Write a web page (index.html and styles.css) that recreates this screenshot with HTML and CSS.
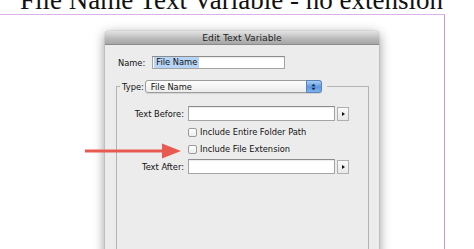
FILE: index.html
```html
<!DOCTYPE html>
<html lang="en">

<head>
    <meta charset="UTF-8">
    <meta name="viewport" content="width=device-width, initial-scale=1.0">
    <title>File Name Text Variable - no extension</title>
    <link rel="stylesheet" href="styles.css">
</head>

<body>
    <h1 class="heading">File Name Text Variable - no extension</h1>

    <div class="frame">
        <div class="dialog">
            <div class="titlebar">Edit Text Variable</div>
            <div class="dialog-body">
                <div class="name-row">
                    <label>Name:</label>
                    <div class="field field-name"><span class="selected">File Name</span></div>
                </div>

                <fieldset class="group">
                    <legend class="group-legend">
                        <label>Type:</label>
                        <div class="select">
                            <span>File Name</span>
                            <span class="stepper">
                                <svg viewBox="0 0 6 9" width="5" height="8">
                                    <path d="M 0.5,3.5 3,0.5 5.5,3.5 Z M 0.5,5.5 3,8.5 5.5,5.5 Z"></path>
                                </svg>
                            </span>
                        </div>
                    </legend>

                    <div class="rows">
                        <label class="row-label">Text Before:</label>
                        <div class="field"></div>
                        <div class="insert"><span class="tri"></span></div>

                        <div class="check">
                            <span class="box"></span>
                            <span>Include Entire Folder Path</span>
                        </div>

                        <div class="check">
                            <span class="box"></span>
                            <span>Include File Extension</span>
                        </div>

                        <label class="row-label">Text After:</label>
                        <div class="field"></div>
                        <div class="insert"><span class="tri"></span></div>
                    </div>
                </fieldset>
            </div>
        </div>

        <svg class="arrow" viewBox="0 0 100 16" width="100" height="16">
            <path d="M 0,6.5 82,6.5 82,9.5 0,9.5 Z"></path>
            <path d="M 77,0.5 96,8 77,15.5 Z"></path>
        </svg>
    </div>
</body>

</html>
```

FILE: styles.css
```css
* {
    box-sizing: border-box;
}

body {
    margin: 0;
    background: #fff;
    height: 249px;
    overflow: hidden;
}

.heading {
    margin: -13px 0 0 20px;
    font-family: "Liberation Serif", "Times New Roman", serif;
    font-weight: normal;
    font-size: 27px;
    line-height: 27px;
    color: #111;
    white-space: nowrap;
}

.frame {
    position: relative;
    width: 445px;
    height: 235px;
    overflow: hidden;
    border-top: 1px solid #dcb0e8;
    border-right: 1px solid #b89ce8;
    padding: 16px 0 0 105px;
}

.dialog {
    width: 274px;
    height: 230px;
    background: #ececec;
    border-radius: 4px 4px 0 0;
    box-shadow: 0 3px 12px rgba(0, 0, 0, 0.45), 0 0 1px rgba(0, 0, 0, 0.5);
    font-family: "DejaVu Sans", Verdana, sans-serif;
    font-size: 8.3px;
    color: #111;
}

.titlebar {
    height: 14px;
    line-height: 14px;
    text-align: center;
    font-size: 9.2px;
    color: #222;
    border-radius: 4px 4px 0 0;
    background: linear-gradient(#e4e4e4, #b9b9b9 60%, #a6a6a6);
    border-bottom: 1px solid #8a8a8a;
}

.dialog-body {
    padding: 11px 0 0 11px;
}

.name-row {
    display: flex;
    align-items: center;
    padding-left: 2px;
    gap: 7px;
}

.field {
    height: 15px;
    background: #fff;
    border: 1px solid #a4a4a4;
    border-top-color: #8c8c8c;
    box-shadow: inset 0 1px 1px rgba(0, 0, 0, 0.08);
}

.field-name {
    width: 133px;
    height: 13px;
    line-height: 11px;
    padding-left: 1px;
}

.selected {
    display: inline-block;
    padding: 0 2px;
    background: #b6d4f6;
}

.group {
    margin: 11px 0 0 0;
    padding: 0;
    width: 253px;
    height: 200px;
    border: 1px solid #b3b3b3;
    border-bottom: none;
    min-inline-size: 0;
}

.group-legend {
    display: flex;
    align-items: center;
    margin-left: 3px;
    padding: 0 5px 0 2px;
    gap: 1px;
}

.select {
    display: flex;
    align-items: center;
    justify-content: space-between;
    width: 177px;
    height: 13px;
    padding-left: 5px;
    border: 1px solid #9c9c9c;
    border-radius: 3px;
    background: linear-gradient(#fdfdfd, #ececec);
    box-shadow: 0 1px 1px rgba(0, 0, 0, 0.1);
}

.stepper {
    display: flex;
    align-items: center;
    justify-content: center;
    width: 16px;
    height: 13px;
    margin-right: -1px;
    border-radius: 0 3px 3px 0;
    background: linear-gradient(#a9cdf6, #5d97e2 55%, #7fb2ef);
    border: 1px solid #5b84bb;
}

.stepper path {
    fill: #1b2a44;
}

.rows {
    display: grid;
    grid-template-columns: 71px 147px 14px;
    grid-template-rows: 15px 12px 12px 13px;
    row-gap: 5px;
    margin-top: 13px;
    align-items: center;
}

.row-label {
    text-align: right;
    padding-right: 4px;
}

.insert {
    justify-self: end;
    display: flex;
    align-items: center;
    justify-content: center;
    width: 12px;
    height: 14px;
    border: 1px solid #b0b0b0;
    background: linear-gradient(#fafafa, #e8e8e8);
}

.tri {
    width: 0;
    height: 0;
    border-top: 2px solid transparent;
    border-bottom: 2px solid transparent;
    border-left: 3px solid #111;
}

.check {
    grid-column: 2 / 4;
    display: flex;
    align-items: center;
    gap: 3px;
    white-space: nowrap;
}

.box {
    width: 9px;
    height: 9px;
    border: 1px solid #9a9a9a;
    border-radius: 2px;
    background: linear-gradient(#fff, #ececec);
}

.arrow {
    position: absolute;
    left: 85px;
    top: 128px;
}

.arrow path {
    fill: #e85a50;
}
```
